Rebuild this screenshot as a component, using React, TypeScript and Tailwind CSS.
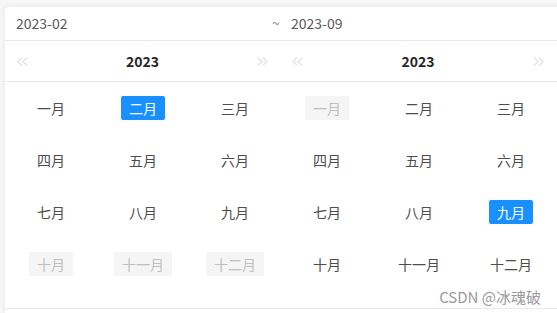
const months = ["一月", "二月", "三月", "四月", "五月", "六月", "七月", "八月", "九月", "十月", "十一月", "十二月"]

const SuperArrow = ({ dir }: { dir: "left" | "right" }) => (
    <svg width="11" height="9" viewBox="0 0 11 9" fill="none" stroke="#c8c8c8" strokeWidth="1">
        {dir === "left" ? (
            <>
                <path d="M5 0.5 L1 4.5 L5 8.5" />
                <path d="M10 0.5 L6 4.5 L10 8.5" />
            </>
        ) : (
            <>
                <path d="M1 0.5 L5 4.5 L1 8.5" />
                <path d="M6 0.5 L10 4.5 L6 8.5" />
            </>
        )}
    </svg>
)

const MonthPanel = ({ selected, disabled, left }: { selected: number; disabled: number[]; left?: boolean }) => (
    <div className="w-[276px] shrink-0">
        <div className={`h-[41px] flex items-center justify-between border-b border-[#e8e8e8] ${left ? "pl-3 pr-[13px]" : "pl-[11px] pr-[13px]"}`}>
            <SuperArrow dir="left" />
            <span className="text-[14px] font-semibold text-[#262626]">2023</span>
            <SuperArrow dir="right" />
        </div>
        <div className="grid grid-cols-3 pb-[18px]">
            {months.map((m, i) => {
                const isSel = i === selected
                const isDis = disabled.includes(i)
                return (
                    <div key={m} className="h-[52px] flex items-center justify-center">
                        <span
                            className={`h-6 leading-6 px-2 rounded-[2px] text-[14px] ${
                                isSel
                                    ? "bg-[#1890ff] text-white"
                                    : isDis
                                      ? "bg-[#f5f5f5] text-[#bfbfbf]"
                                      : "text-[#4d4d4d]"
                            }`}>
                            {m}
                        </span>
                    </div>
                )
            })}
        </div>
    </div>
)

const App = () => {
    return (
        <div
            className="relative w-[557px] h-[313px] overflow-hidden bg-[#f7f7f7]"
            style={{ fontFamily: '"Noto Sans CJK SC", "Noto Sans", sans-serif' }}>
            <div className="absolute left-[5px] top-[7px] w-[560px] h-[320px] bg-white rounded-tl-[4px] shadow-[0_0_6px_rgba(0,0,0,0.08)]">
                <div className="h-[34px] flex items-center border-b border-[#e8e8e8] text-[14px] text-[#595959]">
                    <div className="w-[266px] pl-[11px]">2023-02</div>
                    <div className="w-[10px] text-center text-[#8c8c8c]">~</div>
                    <div className="pl-[10px]">2023-09</div>
                </div>
                <div className="flex border-b border-[#e8e8e8]">
                    <MonthPanel left selected={1} disabled={[9, 10, 11]} />
                    <MonthPanel selected={8} disabled={[0]} />
                </div>
            </div>
            <div className="absolute right-[16px] top-[286px] text-[15px] text-[#9a9a9a]">CSDN @冰魂破</div>
        </div>
    )
}

export default App
